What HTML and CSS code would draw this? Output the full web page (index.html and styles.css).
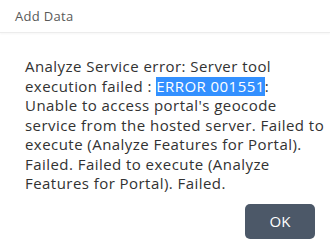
FILE: index.html
```html
<!DOCTYPE html>
<html>
<head>
<meta charset="utf-8">
<link rel="stylesheet" href="styles.css">
</head>
<body>
<div class="dialog">
  <div class="header">Add Data</div>
  <div class="content">
    <p class="message">Analyze Service error: Server tool<br>execution failed : <span class="sel">ERROR 001551</span>:<br>Unable to access portal's geocode<br>service from the hosted server. Failed to<br>execute (Analyze Features for Portal).<br>Failed. Failed to execute (Analyze<br>Features for Portal). Failed.</p>
  </div>
  <div class="footer">
    <button class="ok">OK</button>
  </div>
</div>
</body>
</html>
```
FILE: styles.css
```css
html, body {
  margin: 0;
  padding: 0;
  background: #ffffff;
}
.dialog {
  width: 330px;
  height: 252px;
  display: flex;
  flex-direction: column;
  font-family: "Open Sans", Lato, sans-serif;
}
.header {
  height: 33px;
  box-sizing: border-box;
  padding: 8px 15px 0 15px;
  font-size: 13px;
  line-height: 16px;
  letter-spacing: 0.3px;
  color: #595959;
  border-bottom: 1px solid #ececec;
  box-shadow: 0 1px 2px rgba(0,0,0,0.04);
}
.content {
  padding: 24px 0 0 25px;
}
.message {
  margin: 0;
  font-size: 15px;
  line-height: 19.5px;
  letter-spacing: 0.45px;
  white-space: nowrap;
  color: #323232;
}
.sel {
  display: inline-block;
  line-height: 19px;
  vertical-align: top;
  margin-top: 0.5px;
  background: #3390ff;
  color: #ffffff;
}
.footer {
  display: flex;
  justify-content: flex-end;
  padding: 10px 15px 0 0;
}
.ok {
  width: 70px;
  height: 35px;
  border: none;
  border-radius: 5px;
  background: #4c5868;
  color: #ffffff;
  font-family: "Open Sans", Lato, sans-serif;
  font-size: 15px;
  padding: 0;
}
```
